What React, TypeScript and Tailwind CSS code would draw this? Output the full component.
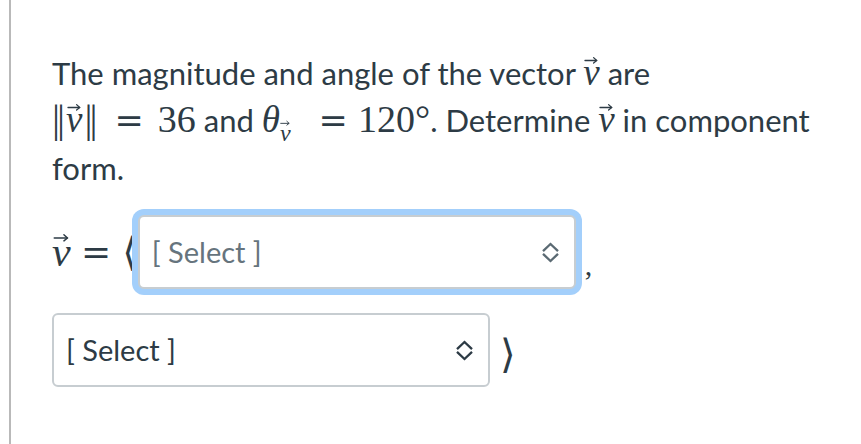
import React from 'react'

function Arrow({ className }: { className: string }) {
  return (
    <svg viewBox="0 0 14 8" className={`absolute left-1/2 -translate-x-1/2 ${className}`} fill="none" stroke="#2d3b45" strokeWidth="1.3" strokeLinecap="round">
      <path d="M1 4.5 H12.5" />
      <path d="M9.6 1.6 L12.7 4.5 L9.6 7" />
    </svg>
  )
}

// v with an arrow over it
function Vec({ size = 'md' }: { size?: 'sm' | 'md' | 'lg' }) {
  if (size === 'sm') {
    return (
      <span className="relative inline-block align-[-9px] font-['Liberation_Serif',serif] text-[24px] italic leading-none">
        <Arrow className="top-[-1px] h-[6px] w-[10px]" />v
      </span>
    )
  }
  if (size === 'lg') {
    return (
      <span className="relative inline-block font-['Liberation_Serif',serif] text-[42px] italic leading-none">
        <Arrow className="top-[2px] h-[9px] w-[17px]" />v
      </span>
    )
  }
  return (
    <span className="relative inline-block font-['Liberation_Serif',serif] text-[37px] italic leading-none">
      <Arrow className="top-[2px] h-[8px] w-[14px]" />v
    </span>
  )
}

function Chevrons({ color }: { color: string }) {
  return (
    <svg width="19" height="21" viewBox="0 0 19 21" fill="none" stroke={color} strokeWidth="2.3" strokeLinecap="butt" strokeLinejoin="miter">
      <path d="M2 9.2 L9.5 2 L17 9.2" />
      <path d="M2 11.8 L9.5 19 L17 11.8" />
    </svg>
  )
}

function SelectBox({ focused = false }: { focused?: boolean }) {
  return (
    <div
      className={`flex h-[74px] w-[438px] items-center justify-between rounded-[6px] border-2 border-[#c7cdd1] bg-white pl-[12px] pr-[14px] text-[29px] ${
        focused ? 'ring-[6px] ring-[#a3cffb] text-[#66747d]' : 'text-[#2d3b45]'
      }`}
    >
      <span>[ Select ]</span>
      <Chevrons color={focused ? '#5b6a73' : '#2d3b45'} />
    </div>
  )
}

export default function App() {
  return (
    <div className="min-h-[444px] w-[861px] bg-white font-['Lato','Noto_Sans',sans-serif]">
      <div className="ml-[9px] min-h-[444px] border-l-2 border-[#b9b9b9] pl-[41px] pt-[50px] text-[#2d3b45]">
        <p className="text-[31px] leading-[46.5px]">
          The magnitude and angle of the vector <Vec /> are
          <br />
          <span className="font-['Liberation_Serif',serif] leading-none">
            <span className="text-[40px] tracking-[-3px]">||</span>
            <span className="ml-[4px]"><Vec /></span>
            <span className="ml-[2px] text-[40px] tracking-[-3px]">||</span>
            <span className="ml-[20px] mr-[14px] font-['DejaVu_Serif',serif] text-[35px]">=</span>
            <span className="text-[38px]">36</span>
          </span>{' '}
          and{' '}
          <span className="font-['Liberation_Serif',serif] leading-none">
            <span className="text-[37px] italic">θ</span>
            <Vec size="sm" />
            <span className="ml-[28px] mr-[10px] font-['DejaVu_Serif',serif] text-[35px]">=</span>
            <span className="text-[38px]">120°</span>
          </span>
          . Determine <Vec /> in component
          <br />
          form.
        </p>

        <div className="mt-[24px] flex items-center">
          <span className="w-[18px] text-center">
            <Vec size="lg" />
          </span>
          <span className="ml-[11px] font-['DejaVu_Serif',serif] text-[36px] leading-none">=</span>
          <span className="ml-[11px] font-['DejaVu_Serif',serif] text-[40px] leading-none">⟨</span>
          <SelectBox focused />
          <span className="ml-[9px] mt-[26px] font-['Liberation_Serif',serif] text-[30px] leading-none">,</span>
        </div>

        <div className="mt-[24px] flex items-center">
          <SelectBox />
          <span className="ml-[10px] mt-[8px] font-['DejaVu_Serif',serif] text-[40px] leading-none">⟩</span>
        </div>
      </div>
    </div>
  )
}
